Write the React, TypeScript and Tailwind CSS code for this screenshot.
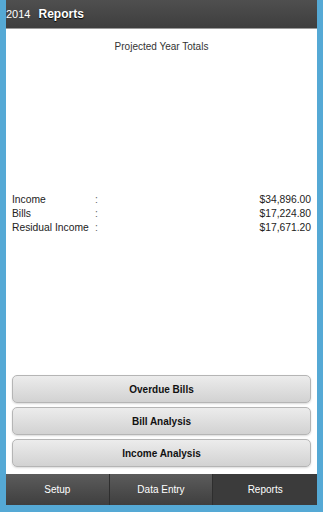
export default function App() {
  const rows = [
    { label: 'Income', value: '$34,896.00' },
    { label: 'Bills', value: '$17,224.80' },
    { label: 'Residual Income', value: '$17,671.20' },
  ];
  const buttons = ['Overdue Bills', 'Bill Analysis', 'Income Analysis'];
  const tabs = ['Setup', 'Data Entry', 'Reports'];

  return (
    <div className="w-[323px] h-[512px] bg-[#55a9d5] pl-[6px] pr-[6px] pb-[7px] font-['Liberation_Sans',Arial,sans-serif]">
      <div className="h-full flex flex-col bg-white">
        {/* Header */}
        <div className="h-[29px] shrink-0 flex items-center gap-[8px] bg-gradient-to-b from-[#4f4f4f] to-[#3e3e3e] border-b border-[#9a9a9a]">
          <span className="text-[11px] text-white">2014</span>
          <span className="text-[12px] font-bold text-white [text-shadow:0_1px_1px_#000]">Reports</span>
        </div>

        {/* Content */}
        <div className="flex-1 flex flex-col px-[6px]">
          <p className="text-center text-[10px] text-[#333] mt-[10px]">Projected Year Totals</p>

          <div className="mt-[139px] flex flex-col">
            {rows.map((r) => (
              <div key={r.label} className="flex items-center h-[14px] text-[10.3px] text-[#222]">
                <span className="w-[83px]">{r.label}</span>
                <span className="text-[#666]">:</span>
                <span className="ml-auto">{r.value}</span>
              </div>
            ))}
          </div>

          <div className="mt-auto mb-[7px] flex flex-col gap-[4px]">
            {buttons.map((b) => (
              <button
                key={b}
                className="h-[28px] rounded-[5px] border border-[#b5b5b5] bg-gradient-to-b from-[#ececec] to-[#d2d2d2] text-[10px] font-bold text-[#111] shadow-[0_1px_2px_rgba(0,0,0,0.15)]"
              >
                {b}
              </button>
            ))}
          </div>
        </div>

        {/* Tab bar */}
        <div className="h-[31px] shrink-0 grid grid-cols-3">
          {tabs.map((t, i) => (
            <div
              key={t}
              className={
                i === 2
                  ? 'flex items-center justify-center bg-[#3b3b3b] text-[10px] text-white'
                  : 'flex items-center justify-center bg-gradient-to-b from-[#5c5c5c] to-[#3f3f3f] border-r border-[#2e2e2e] text-[10px] text-white'
              }
            >
              {t}
            </div>
          ))}
        </div>
      </div>
    </div>
  );
}
